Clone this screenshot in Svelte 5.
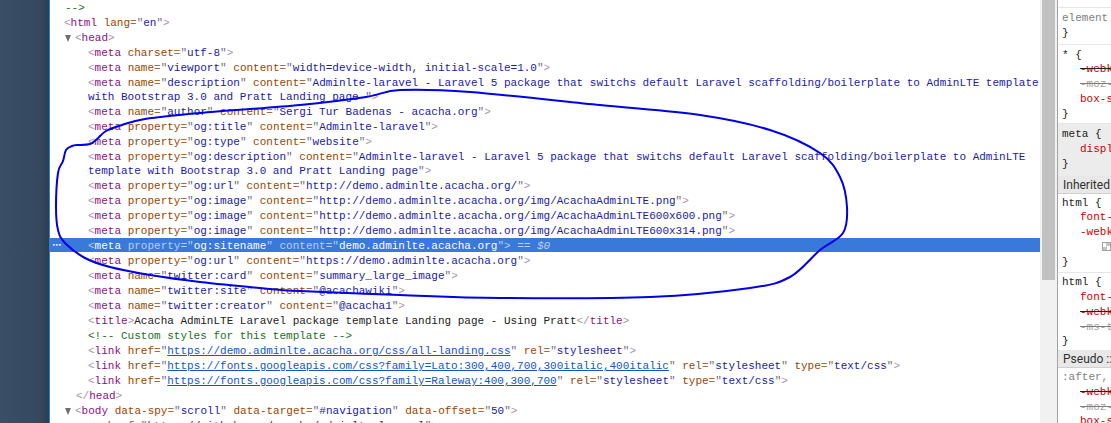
<script>
	const link = (href) => ({ href });

	const rows = [
		{ level: 0, comment: '-->', nudge: 1 },
		{ level: 0, tag: 'html', attrs: [['lang', 'en']] },
		{ level: 1, tag: 'head', open: true },
		{ level: 2, tag: 'meta', attrs: [['charset', 'utf-8']] },
		{ level: 2, tag: 'meta', attrs: [['name', 'viewport'], ['content', 'width=device-width, initial-scale=1.0']] },
		{ level: 2, tag: 'meta', wrap: true, attrs: [['name', 'description'], ['content', 'Adminlte-laravel - Laravel 5 package that switchs default Laravel scaffolding/boilerplate to AdminLTE template with Bootstrap 3.0 and Pratt Landing page ']] },
		{ level: 2, tag: 'meta', attrs: [['name', 'author'], ['content', 'Sergi Tur Badenas - acacha.org']] },
		{ level: 2, tag: 'meta', attrs: [['property', 'og:title'], ['content', 'Adminlte-laravel']] },
		{ level: 2, tag: 'meta', attrs: [['property', 'og:type'], ['content', 'website']] },
		{ level: 2, tag: 'meta', wrap: true, attrs: [['property', 'og:description'], ['content', 'Adminlte-laravel - Laravel 5 package that switchs default Laravel scaffolding/boilerplate to AdminLTE template with Bootstrap 3.0 and Pratt Landing page']] },
		{ level: 2, tag: 'meta', attrs: [['property', 'og:url'], ['content', 'http://demo.adminlte.acacha.org/']] },
		{ level: 2, tag: 'meta', attrs: [['property', 'og:image'], ['content', 'http://demo.adminlte.acacha.org/img/AcachaAdminLTE.png']] },
		{ level: 2, tag: 'meta', attrs: [['property', 'og:image'], ['content', 'http://demo.adminlte.acacha.org/img/AcachaAdminLTE600x600.png']] },
		{ level: 2, tag: 'meta', attrs: [['property', 'og:image'], ['content', 'http://demo.adminlte.acacha.org/img/AcachaAdminLTE600x314.png']] },
		{ level: 2, tag: 'meta', selected: true, attrs: [['property', 'og:sitename'], ['content', 'demo.adminlte.acacha.org']] },
		{ level: 2, tag: 'meta', attrs: [['property', 'og:url'], ['content', 'https://demo.adminlte.acacha.org']] },
		{ level: 2, tag: 'meta', attrs: [['name', 'twitter:card'], ['content', 'summary_large_image']] },
		{ level: 2, tag: 'meta', attrs: [['name', 'twitter:site'], ['content', '@acachawiki']] },
		{ level: 2, tag: 'meta', attrs: [['name', 'twitter:creator'], ['content', '@acacha1']] },
		{ level: 2, tag: 'title', text: 'Acacha AdminLTE Laravel package template Landing page - Using Pratt' },
		{ level: 2, comment: '<!-- Custom styles for this template -->' },
		{ level: 2, tag: 'link', attrs: [['href', link('https://demo.adminlte.acacha.org/css/all-landing.css')], ['rel', 'stylesheet']] },
		{ level: 2, tag: 'link', attrs: [['href', link('https://fonts.googleapis.com/css?family=Lato:300,400,700,300italic,400italic')], ['rel', 'stylesheet'], ['type', 'text/css']] },
		{ level: 2, tag: 'link', attrs: [['href', link('https://fonts.googleapis.com/css?family=Raleway:400,300,700')], ['rel', 'stylesheet'], ['type', 'text/css']] },
		{ level: 1, close: 'head' },
		{ level: 1, tag: 'body', open: true, attrs: [['data-spy', 'scroll'], ['data-target', '#navigation'], ['data-offset', '50']] },
		{ level: 2, tag: 'a', shut: true, attrs: [['href', 'https://github.com/acacha/adminlte-laravel']] }
	];

	// traced from the hand drawn loop, clockwise from where the pen closes it
	const loop = [
		[78, 145], [90, 144], [97, 139], [106, 131], [122, 125], [145, 119], [200, 113], [300, 105], [366, 97], [400, 90], [470, 92], [600, 105],
		[700, 115], [770, 130], [820, 153], [840, 177], [847, 207], [843, 233], [820, 250], [790, 277],
		[750, 288], [650, 297], [500, 298], [400, 295], [300, 291], [260, 288], [200, 282], [150, 275], [110, 267],
		[85, 258], [65, 243], [58, 230], [56, 207], [58, 173], [63, 161], [66, 150], [72, 146], [78, 145]
	];

	const smooth = (pts) => {
		let d = `M${pts[0][0]} ${pts[0][1]}`;
		for (let i = 0; i < pts.length - 1; i++) {
			const a = pts[Math.max(i - 1, 0)];
			const b = pts[i];
			const c = pts[i + 1];
			const e = pts[Math.min(i + 2, pts.length - 1)];
			d += ` C${b[0] + (c[0] - a[0]) / 6} ${b[1] + (c[1] - a[1]) / 6} ${c[0] - (e[0] - b[0]) / 6} ${c[1] - (e[1] - b[1]) / 6} ${c[0]} ${c[1]}`;
		}
		return d;
	};

	const loopPath = smooth(loop);
</script>

{#snippet attr(item)}{' '}<span class="name">{item[0]}</span><span class="eq">=</span><span class="quote">"</span>{#if item[1].href}<span class="url">{item[1].href}</span>{:else}<span class="value">{item[1]}</span>{/if}<span class="quote">"</span>{/snippet}

<div class="page">
	<div class="edge"></div>

	<main class="elements">
		{#each rows as row}
			<div class="row" class:wrap={row.wrap} class:selected={row.selected} style="padding-left: {14 + row.level * 12 + (row.nudge ?? 0)}px">{#if row.selected}<span class="dots">•••</span>{/if}{#if row.open}<i class="arrow"></i>{/if}{#if row.shut}<i class="arrow shut"></i>{/if}{#if row.comment}<span class="comment">{row.comment}</span>{:else if row.close}<span class="br">&lt;/</span><span class="tag">{row.close}</span><span class="br">&gt;</span>{:else}<span class="br">&lt;</span><span class="tag">{row.tag}</span>{#each row.attrs ?? [] as item}{@render attr(item)}{/each}<span class="br">&gt;</span>{#if row.text}<span class="text">{row.text}</span><span class="br">&lt;/</span><span class="tag">{row.tag}</span><span class="br">&gt;</span>{/if}{#if row.selected}<span class="marker">{' == '}<em>$0</em></span>{/if}{/if}</div>
		{/each}
	</main>

	<div class="track"><div class="thumb"></div></div>

	<aside class="styles">
		<section class="rule first low">
			<div class="sel muted">element.style {'{'}</div>
			<div class="sel">{'}'}</div>
		</section>
		<section class="rule low">
			<div class="sel">* {'{'}</div>
			<div class="decl off">-webkit-box-sizing: border-box;</div>
			<div class="decl off faint">-moz-box-sizing: border-box;</div>
			<div class="decl">box-sizing: border-box;</div>
			<div class="sel">{'}'}</div>
		</section>
		<section class="rule agent low">
			<div class="sel">meta {'{'}</div>
			<div class="decl">display: none;</div>
			<div class="sel">{'}'}</div>
		</section>
		<div class="band">Inherited from html</div>
		<section class="rule">
			<div class="sel">html {'{'}</div>
			<div class="decl">font-size: 10px;</div>
			<div class="decl">-webkit-tap-highlight-color:</div>
			<div class="decl"><i class="swatch"></i></div>
			<div class="sel">{'}'}</div>
		</section>
		<section class="rule before-band">
			<div class="sel">html {'{'}</div>
			<div class="decl">font-family: sans-serif;</div>
			<div class="decl off">-webkit-text-size-adjust: 100%;</div>
			<div class="decl off faint">-ms-text-size-adjust: 100%;</div>
			<div class="sel">{'}'}</div>
		</section>
		<div class="band">Pseudo ::after element</div>
		<section class="rule">
			<div class="sel muted">:after, :before {'{'}</div>
			<div class="decl off">-webkit-box-sizing: border-box;</div>
			<div class="decl off faint">-moz-box-sizing: border-box;</div>
			<div class="decl">box-sizing: border-box;</div>
		</section>
	</aside>

	<svg class="scribble" width="1111" height="423" viewBox="0 0 1111 423" aria-hidden="true">
		<path d={loopPath} />
	</svg>
</div>

<style>
	:global(body) {
		background: #fff;
	}

	.page {
		position: relative;
		display: flex;
		width: 1111px;
		height: 423px;
		overflow: hidden;
		font-family: 'Liberation Mono', monospace;
		font-size: 11px;
	}

	.edge {
		flex: 0 0 49px;
		border-right: 1px solid #2b82d6;
		background: linear-gradient(90deg, #3a4f66 0, #34495e 80%, #2c3e50 100%);
	}

	.elements {
		flex: 0 0 990px;
		background: #fff;
	}

	.row {
		position: relative;
		min-height: 15px;
		box-sizing: border-box;
		padding-top: 1px;
		line-height: 14px;
		white-space: pre-wrap;
		color: #222;
	}

	.row.selected {
		height: 14px;
		min-height: 14px;
		margin-bottom: 1px;
		background: #3879d9;
	}

	.dots {
		position: absolute;
		left: 2px;
		top: 0;
		font-family: 'DejaVu Sans', sans-serif;
		font-size: 6px;
		letter-spacing: -0.5px;
		color: #fff;
	}

	.arrow {
		display: inline-block;
		width: 0;
		height: 0;
		margin-left: -11px;
		margin-right: 4px;
		border-left: 3.5px solid transparent;
		border-right: 3.5px solid transparent;
		border-top: 7px solid #6e6e6e;
		vertical-align: -1px;
	}

	.arrow.shut {
		margin-left: -10px;
		margin-right: 5px;
		border-top: 3.5px solid transparent;
		border-bottom: 3.5px solid transparent;
		border-left: 5px solid #6e6e6e;
		border-right: 0;
		vertical-align: 0;
	}

	.br {
		color: #a894a6;
	}

	.tag {
		color: #881280;
	}

	.name {
		color: #994500;
	}

	.eq {
		color: #a86a3a;
	}

	.quote {
		color: #6e6e80;
	}

	.value {
		color: #1a1aa6;
	}

	.url {
		color: #1155cc;
		text-decoration: underline;
	}

	.comment {
		color: #236e25;
	}

	.text {
		color: #222;
	}

	.selected .br,
	.selected .name,
	.selected .eq,
	.selected .quote,
	.marker {
		color: #b9cff0;
	}

	.selected .tag,
	.selected .value {
		color: #fff;
	}

	.marker em {
		font-style: italic;
	}

	.track {
		position: relative;
		flex: 0 0 17px;
		background: #f1f1f1;
	}

	.thumb {
		width: 13px;
		height: 280px;
		margin-left: 2px;
		background: #c1c1c1;
	}

	.styles {
		flex: 1;
		min-width: 0;
		border-left: 1px solid #a3a3a3;
		background: #fff;
		overflow: hidden;
		white-space: nowrap;
	}

	.rule {
		padding: 2px 0 3px 4px;
		line-height: 14.75px;
		border-bottom: 1px solid #e6e6e6;
		color: #222;
	}

	.rule.low {
		padding-top: 3px;
		padding-bottom: 2px;
	}

	.rule.first {
		margin-top: 7px;
		border-top: 1px solid #e6e6e6;
		padding-bottom: 3px;
	}

	.rule.agent {
		padding-bottom: 4px;
		background: #ececec;
		border-bottom: 0;
	}

	.rule.before-band {
		padding-bottom: 1px;
		border-bottom: 0;
	}

	.rule:last-child {
		border-bottom: 0;
	}

	.muted {
		color: #808080;
	}

	.decl {
		height: 14.75px;
		padding-left: 18px;
		color: #c80000;
	}

	.off {
		text-decoration: line-through;
		text-decoration-color: #222;
	}

	.faint {
		color: #a9a0a0;
		text-decoration-color: #808080;
	}

	.swatch {
		display: inline-block;
		width: 7px;
		height: 7px;
		margin-left: 22px;
		border: 1px solid #a3a3a3;
		background: conic-gradient(#c4c4c4 25%, #fff 0 50%, #c4c4c4 0 75%, #fff 0);
		vertical-align: -1px;
	}

	.band {
		height: 18px;
		padding-left: 5px;
		line-height: 18px;
		background: #e8e8e8;
		border-bottom: 1px solid #d0d0d0;
		box-sizing: border-box;
		font-family: Roboto, sans-serif;
		font-size: 12px;
		color: #303030;
	}

	.scribble {
		position: absolute;
		inset: 0;
		pointer-events: none;
	}

	.scribble path {
		fill: none;
		stroke: #0000e6;
		stroke-width: 2;
		stroke-linecap: round;
	}
</style>
